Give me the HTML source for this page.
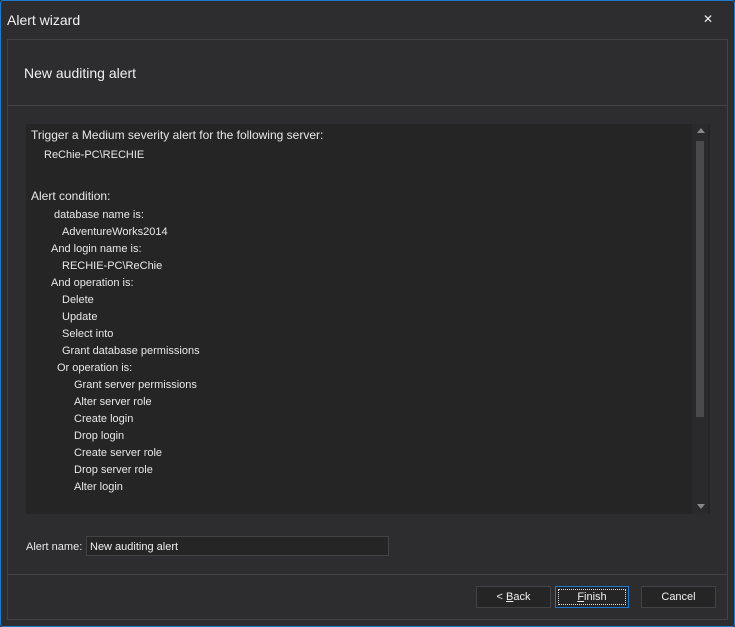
<!DOCTYPE html>
<html><head><meta charset="utf-8"><style>
*{margin:0;padding:0;box-sizing:border-box}
body{width:735px;height:627px;background:#2d2d30;font-family:"Liberation Sans",sans-serif;color:#f0f0f0;position:relative;overflow:hidden}
.frame{position:absolute;left:0;top:0;width:735px;height:627px;border:1px solid #1c7ad0;border-radius:3px}
.title{position:absolute;left:7px;top:12px;font-size:14px;color:#f1f1f1}
.x{position:absolute;left:703px;top:12px;font-size:12px}
.panel{position:absolute;left:7px;top:39px;width:721px;height:581px;border:1px solid #434346}
.hsep{position:absolute;left:7px;width:721px;height:1px;background:#434346}
.head{position:absolute;left:24px;top:65px;font-size:14px}
.box{position:absolute;left:26px;top:124px;width:684px;height:390px;background:#252526}
.sb{position:absolute;left:692px;top:124px;width:16px;height:390px;background:#2a2a2c}
.thumb{position:absolute;left:696px;top:141px;width:8px;height:276px;background:#4a4a4d}
.t{position:absolute;font-size:11px;white-space:nowrap;color:#e8e8e8;margin-top:2px}
.t.b{font-size:12px;margin-top:1px}
.inp{position:absolute;left:86px;top:536px;width:303px;height:20px;border:1px solid #434346;background:#252526;font-size:11px;padding:4px 3px}
.btn{position:absolute;top:586px;height:22px;border:1px solid #434346;background:#252526;font-size:11px;text-align:center;line-height:21px}
</style></head><body>
<div class="frame"></div>
<div class="title">Alert wizard</div>
<div class="x">✕</div>
<div class="panel"></div>
<div class="hsep" style="top:105px"></div>
<div class="hsep" style="top:574px"></div>
<div class="head">New auditing alert</div>
<div class="box"></div>
<div class="sb"></div>
<div class="thumb"></div>
<div style="position:absolute;left:697px;top:128px;width:0;height:0;border-left:4px solid transparent;border-right:4px solid transparent;border-bottom:5px solid #888"></div>
<div style="position:absolute;left:697px;top:504px;width:0;height:0;border-left:4px solid transparent;border-right:4px solid transparent;border-top:5px solid #888"></div>
<div class="t b" style="left:31px;top:127px">Trigger a Medium severity alert for the following server:</div>
<div class="t" style="left:44px;top:147px">ReChie-PC\RECHIE</div>
<div class="t b" style="left:31px;top:188px">Alert condition:</div>
<div class="t" style="left:54px;top:207px">database name is:</div>
<div class="t" style="left:62px;top:224px">AdventureWorks2014</div>
<div class="t" style="left:51px;top:241px">And login name is:</div>
<div class="t" style="left:62px;top:258px">RECHIE-PC\ReChie</div>
<div class="t" style="left:51px;top:275px">And operation is:</div>
<div class="t" style="left:62px;top:292px">Delete</div>
<div class="t" style="left:62px;top:309px">Update</div>
<div class="t" style="left:62px;top:326px">Select into</div>
<div class="t" style="left:62px;top:343px">Grant database permissions</div>
<div class="t" style="left:57px;top:360px">Or operation is:</div>
<div class="t" style="left:74px;top:377px">Grant server permissions</div>
<div class="t" style="left:74px;top:394px">Alter server role</div>
<div class="t" style="left:74px;top:411px">Create login</div>
<div class="t" style="left:74px;top:428px">Drop login</div>
<div class="t" style="left:74px;top:445px">Create server role</div>
<div class="t" style="left:74px;top:462px">Drop server role</div>
<div class="t" style="left:74px;top:479px">Alter login</div>
<div class="t" style="left:26px;top:539px">Alert name:</div>
<div class="inp">New auditing alert</div>
<div class="btn" style="left:476px;width:75px">&lt; <u>B</u>ack</div>
<div class="btn" style="left:555px;width:74px;border-color:#1c7ad0"><div style="position:absolute;left:2px;top:2px;right:2px;bottom:2px;border:1px dotted #ddd"></div><u>F</u>inish</div>
<div class="btn" style="left:641px;width:75px">Cancel</div>
</body></html>
